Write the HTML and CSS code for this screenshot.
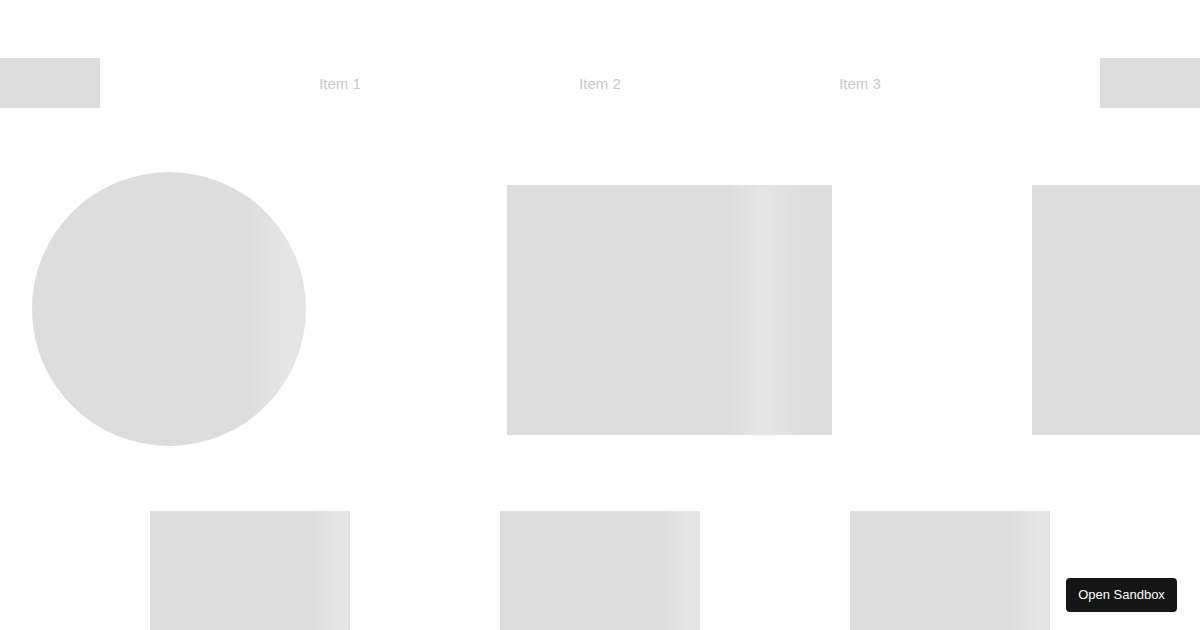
FILE: index.html
```html
<!DOCTYPE html>
<html>
<head>
<meta charset="utf-8">
<link rel="stylesheet" href="styles.css">
</head>
<body>
<div class="page">
  <header class="header">
    <div class="block"></div>
    <nav class="nav">
      <span class="nav-item">Item 1</span>
      <span class="nav-item">Item 2</span>
      <span class="nav-item">Item 3</span>
    </nav>
    <div class="block"></div>
  </header>
  <section class="hero">
    <div class="circle shimmer-circle"></div>
    <div class="card shimmer-card"></div>
    <div class="card card-plain"></div>
  </section>
  <section class="tiles">
    <div class="tile shimmer-tile"></div>
    <div class="tile shimmer-tile"></div>
    <div class="tile shimmer-tile"></div>
  </section>
</div>
<button class="sandbox">Open Sandbox</button>
</body>
</html>
```
FILE: styles.css
```css
html, body {
  margin: 0;
  padding: 0;
  background: #ffffff;
  font-family: "Liberation Sans", Arial, sans-serif;
}
.page {
  width: 1200px;
  height: 630px;
  overflow: hidden;
  padding-top: 58px;
  box-sizing: border-box;
}
.header {
  display: flex;
  align-items: center;
  height: 50px;
}
.block {
  width: 100px;
  height: 50px;
  background: #dddddd;
  flex: none;
}
.nav {
  flex: 1;
  display: flex;
  justify-content: center;
}
.nav-item {
  width: 260px;
  text-align: center;
  font-size: 15px;
  color: #c8c8c8;
}
.hero {
  margin-top: 64px;
  height: 274px;
  display: flex;
  align-items: flex-start;
  gap: 200px;
  padding-left: 32px;
}
.circle {
  width: 274px;
  height: 274px;
  border-radius: 50%;
  flex: none;
  margin-right: 1px;
}
.card {
  width: 325px;
  height: 250px;
  flex: none;
  margin-top: 13px;
  background: #dddddd;
}
.shimmer-circle {
  background: linear-gradient(90deg, #dddddd 0%, #dddddd 79%, #e3e3e3 88%, #e6e6e6 94%, #e3e3e3 100%);
}
.shimmer-card {
  background: linear-gradient(90deg, #dddddd 0%, #dddddd 68%, #e2e2e2 74%, #e6e6e6 79%, #e2e2e2 84%, #dddddd 91%, #dddddd 100%);
}
.tiles {
  margin-top: 65px;
  display: flex;
  justify-content: center;
  gap: 150px;
}
.tile {
  width: 200px;
  height: 150px;
  flex: none;
}
.shimmer-tile {
  background: linear-gradient(90deg, #dddddd 0%, #dddddd 80%, #e2e2e2 88%, #e6e6e6 96%, #e4e4e4 100%);
}
.sandbox {
  position: fixed;
  right: 23px;
  bottom: 18px;
  height: 34px;
  width: 111px;
  padding: 0 0 2px 0;
  border: none;
  border-radius: 4px;
  background: #151515;
  color: #ffffff;
  font-family: "Liberation Sans", Arial, sans-serif;
  font-size: 13px;
}
```
